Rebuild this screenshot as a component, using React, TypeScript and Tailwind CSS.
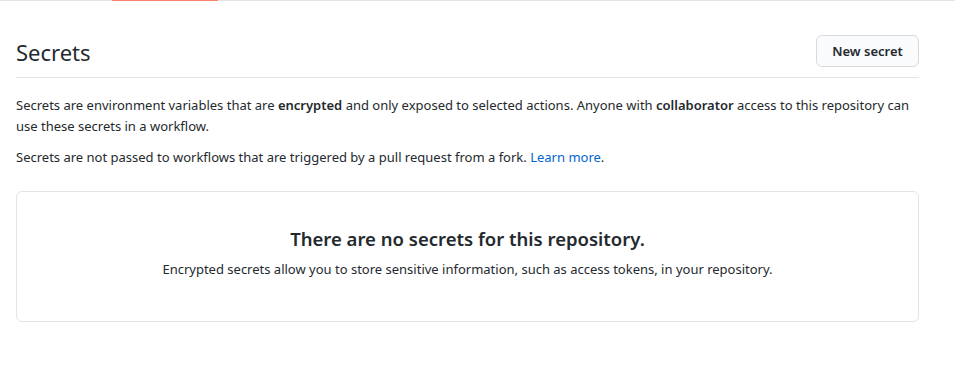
import React from "react";

export default function App() {
  return (
    <div
      className="w-[955px] h-[390px] bg-white text-[#24292e] overflow-hidden"
      style={{ fontFamily: '"Noto Sans", "Liberation Sans", sans-serif' }}
    >
      <div className="flex h-px w-full">
        <div className="w-[112px] bg-[#e1e4e8]" />
        <div className="w-[106px] bg-[#f9826c]" />
        <div className="flex-1 bg-[#e1e4e8]" />
      </div>
      <div className="pl-4 pr-[36px] pt-[34px]">
        <div className="flex items-center justify-between border-b border-[#e1e4e8] pb-[10px]">
          <h2 className="text-[22px] leading-[29px] font-normal pt-[3px]">Secrets</h2>
          <button className="h-[32px] w-[103px] rounded-md border border-[#d8dadd] bg-[#fafbfc] text-[13px] font-semibold leading-5">
            New secret
          </button>
        </div>
        <div className="mt-[17px] text-[13px] leading-[21px]">
          <p className="mb-[10px]">
            Secrets are environment variables that are <strong className="font-semibold">encrypted</strong> and only
            exposed to selected actions. Anyone with <strong className="font-semibold">collaborator</strong> access to
            this repository can use these secrets in a workflow.
          </p>
          <p className="mb-[10px]">
            Secrets are not passed to workflows that are triggered by a pull request from a fork.{" "}
            <a className="text-[#0366d6]" href="#">
              Learn more
            </a>
            .
          </p>
        </div>
        <div className="mt-[23px] rounded-md border border-[#e1e4e8] pt-8 pb-[31px] text-center">
          <h3 className="text-[18.5px] leading-[30px] font-semibold mb-[5px]">
            There are no secrets for this repository.
          </h3>
          <p className="text-[13px] leading-[21px] mb-[10px]">
            Encrypted secrets allow you to store sensitive information, such as access tokens, in your repository.
          </p>
        </div>
      </div>
    </div>
  );
}
